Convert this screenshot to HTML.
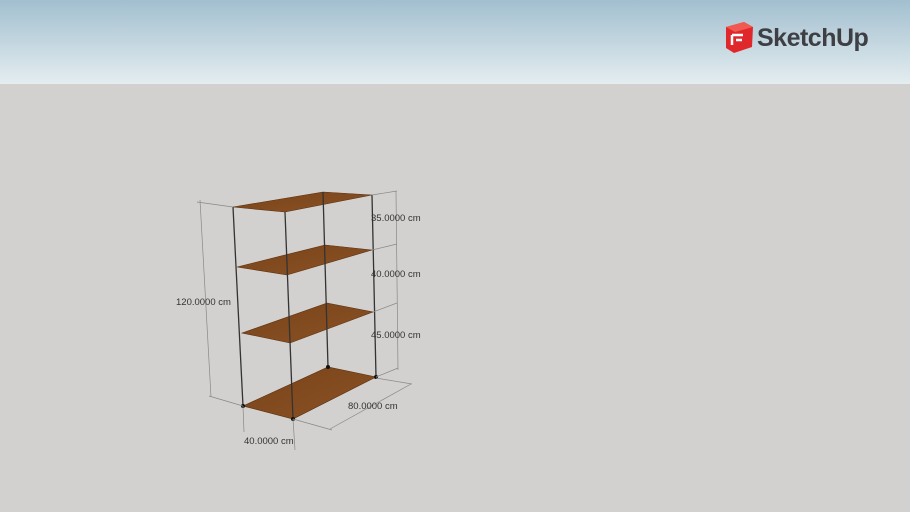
<!DOCTYPE html>
<html><head><meta charset="utf-8"><style>
html,body{margin:0;padding:0;width:910px;height:512px;overflow:hidden;background:#d2d1cf;font-family:"Liberation Sans",sans-serif}
.sky{position:absolute;left:0;top:0;width:910px;height:84px;background:linear-gradient(#a2bfcf,#e4edf0)}
.logo{position:absolute;left:757px;top:24px;font-size:25px;font-weight:bold;color:#3d3f44;letter-spacing:-0.5px}
svg{position:absolute;left:0;top:0}
</style></head><body>
<div class="sky"></div>
<div class="logo">SketchUp</div>
<svg width="910" height="512">
<defs><linearGradient id="w" x1="0" y1="0" x2="1" y2="1"><stop offset="0" stop-color="#7a4418"/><stop offset="1" stop-color="#8a5226"/></linearGradient></defs>
<!-- logo icon -->
<polygon points="726,27 744,22 753,27 752,47 734,53 726,48" fill="#e0282c"/>
<polygon points="744,22 753,27 735,32 726,27" fill="#f05a50"/>
<path d="M732,35 h11 M732,35 v10 M736,40 h6" stroke="#fff" stroke-width="2.5" fill="none"/>
<g fill="url(#w)" stroke="#5a3010" stroke-width="0.6">
<polygon points="233,207 323,192 372,195 285,212"/>
<polygon points="237,267 325,245 372,250 287,275"/>
<polygon points="242,333 327,303 373,312 290,343"/>
<polygon points="243,406 328,367 376,377 293,419"/>
</g>
<g stroke="#333" stroke-width="1.3">
<line x1="233" y1="207" x2="243" y2="406"/>
<line x1="285" y1="212" x2="293" y2="419"/>
<line x1="323" y1="192" x2="328" y2="367"/>
<line x1="372" y1="195" x2="376" y2="377"/>
</g>
<g fill="#111"><circle cx="243" cy="406" r="2"/><circle cx="293" cy="419" r="2"/><circle cx="328" cy="367" r="2"/><circle cx="376" cy="377" r="2"/></g>
<g stroke="#888" stroke-width="0.7" fill="none">
<line x1="197" y1="202" x2="233" y2="207"/><line x1="200" y1="200" x2="211" y2="397"/><line x1="209" y1="396" x2="243" y2="406"/>
<line x1="372" y1="195" x2="397" y2="191"/><line x1="396" y1="191" x2="398" y2="370"/>
<line x1="372" y1="250" x2="397" y2="244"/><line x1="373" y1="312" x2="397" y2="303"/><line x1="376" y1="377" x2="398" y2="368"/>
<line x1="376" y1="378" x2="412" y2="384"/><line x1="411" y1="384" x2="330" y2="429"/><line x1="293" y1="419" x2="332" y2="430"/>
<line x1="243" y1="406" x2="244" y2="432"/><line x1="293" y1="419" x2="295" y2="450"/>
</g>
<g font-family="Liberation Sans,sans-serif" font-size="9.5" fill="#333">
<text x="176" y="305">120.0000 cm</text>
<text x="371" y="221">35.0000 cm</text>
<text x="371" y="277">40.0000 cm</text>
<text x="371" y="338">45.0000 cm</text>
<text x="348" y="409">80.0000 cm</text>
<text x="244" y="444">40.0000 cm</text>
</g>
</svg>
</body></html>
